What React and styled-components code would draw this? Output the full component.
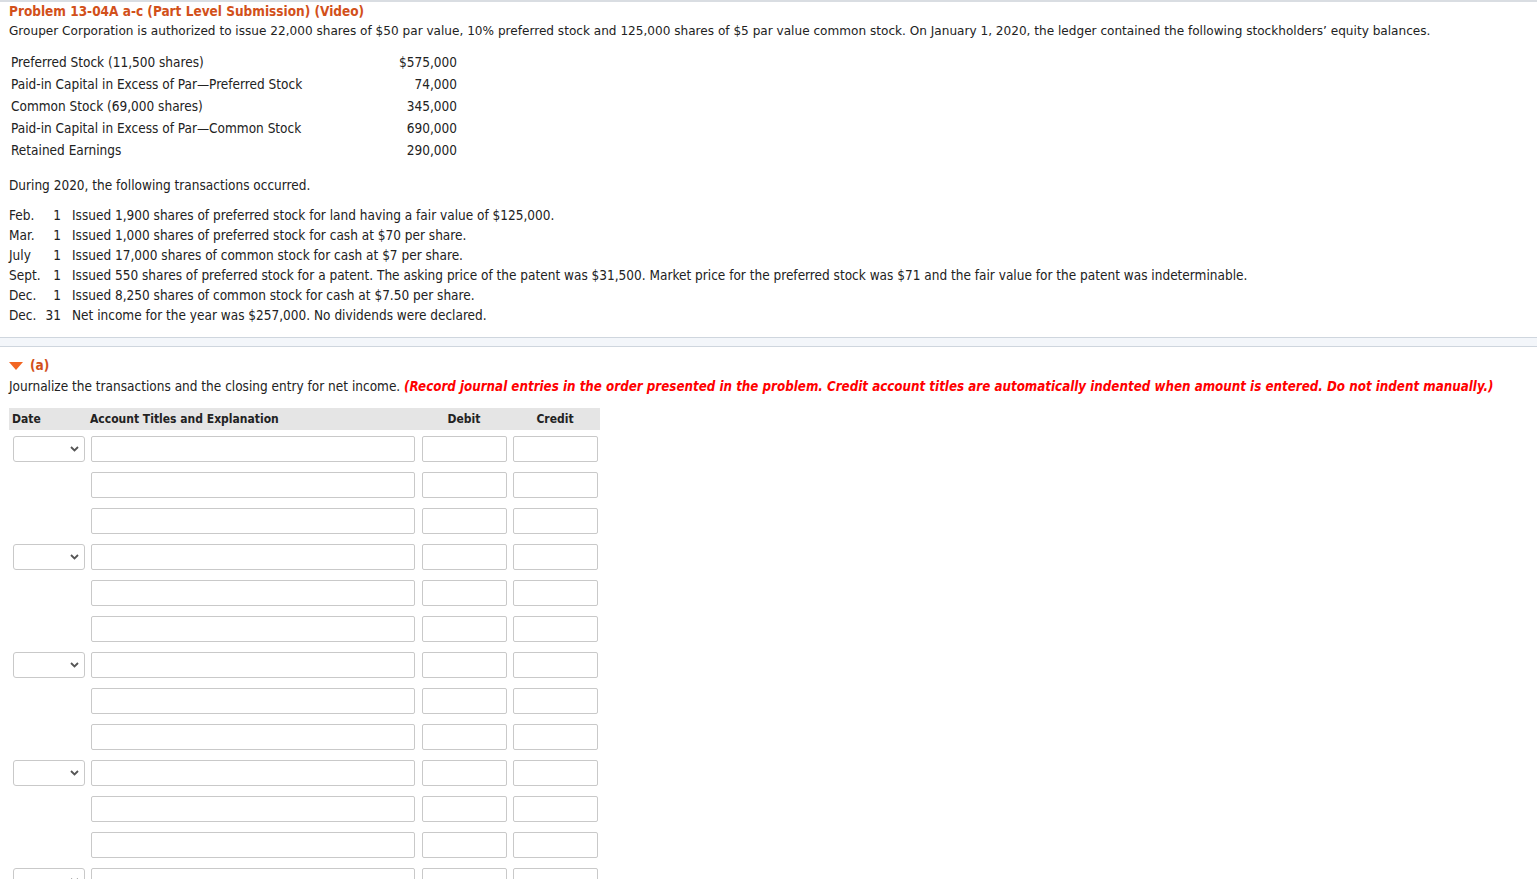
import React from 'react';
import styled, { createGlobalStyle } from 'styled-components';

const GlobalStyle = createGlobalStyle`
  body {
    margin: 0;
    background: #fff;
    color: #222;
    font-family: "DejaVu Sans Condensed", "DejaVu Sans", sans-serif;
    font-size: 13.5px;
  }
`;

const Page = styled.div`
  border-top: 2px solid #d9dde2;
`;

const Problem = styled.div`
  padding: 0 9px;
`;

const Title = styled.div`
  color: #d2501a;
  font-weight: bold;
  line-height: 20px;
  margin-top: -1px;
`;

const Intro = styled.p`
  margin: 0;
  font-family: "DejaVu Sans", sans-serif;
  font-size: 12.1px;
  line-height: 20px;
`;

const Balances = styled.div`
  display: grid;
  grid-template-columns: 330px 116px;
  grid-auto-rows: 22px;
  align-items: center;
  margin: 10px 0 0 2px;
  width: max-content;
`;

const Amount = styled.div`
  text-align: right;
`;

const Lead = styled.p`
  margin: 14px 0 0;
  line-height: 20px;
`;

const Transactions = styled.div`
  display: grid;
  grid-template-columns: 36px 16px 1fr;
  grid-auto-rows: 20px;
  align-items: center;
  margin-top: 10px;
`;

const Month = styled.div``;

const Day = styled.div`
  text-align: right;
`;

const Desc = styled.div`
  padding-left: 11px;
  white-space: nowrap;
`;

const Divider = styled.div`
  margin-top: 12px;
  height: 8px;
  background: #f3f6fa;
  border-top: 1px solid #cfd6de;
  border-bottom: 1px solid #cfd6de;
`;

const Part = styled.div`
  padding: 0 9px;
`;

const PartHead = styled.div`
  display: flex;
  align-items: center;
  gap: 7px;
  margin-top: 8px;
  height: 20px;
  color: #d2501a;
  font-weight: bold;
`;

const Triangle = styled.span`
  width: 0;
  height: 0;
  border-left: 7px solid transparent;
  border-right: 7px solid transparent;
  border-top: 8px solid #f26522;
  margin-top: 2px;
`;

const Instruction = styled.p`
  margin: 1px 0 0;
  line-height: 20px;
  white-space: nowrap;
`;

const Note = styled.em`
  color: #f00;
  font-weight: bold;
  font-size: 13.25px;
`;

const Journal = styled.div`
  margin-top: 11px;
  width: 591px;
`;

const Cols = `
  display: grid;
  grid-template-columns: 79px 330px 92px 90px;
`;

const HeadRow = styled.div`
  ${Cols}
  background: #e5e5e5;
  height: 22px;
  align-items: center;
  font-weight: bold;
  font-size: 12px;
`;

const HeadCell = styled.div`
  padding-left: ${(p) => p.$pad || 0}px;
  text-align: ${(p) => (p.$center ? 'center' : 'left')};
`;

const Row = styled.div`
  ${Cols}
  height: 26px;
  margin-top: ${(p) => (p.$first ? 6 : 10)}px;
`;

const Cell = styled.div`
  padding-left: ${(p) => p.$pad}px;
`;

const Select = styled.div`
  box-sizing: border-box;
  width: 72px;
  height: 26px;
  border: 1px solid #c9c9c9;
  border-radius: 3px;
  background: #fff;
  display: flex;
  align-items: center;
  justify-content: flex-end;
  padding-right: 5px;
`;

const Field = styled.div`
  box-sizing: border-box;
  width: ${(p) => p.$w}px;
  height: 26px;
  border: 1px solid #c9c9c9;
  border-radius: 2px;
  background: #fff;
`;

const Chevron = () => (
  <svg width="9" height="6" viewBox="0 0 9 6">
    <path d="M1 1l3.5 3.5L8 1" fill="none" stroke="#555" strokeWidth="1.8" />
  </svg>
);

const balances = [
  ['Preferred Stock (11,500 shares)', '$575,000'],
  ['Paid-in Capital in Excess of Par\u2014Preferred Stock', '74,000'],
  ['Common Stock (69,000 shares)', '345,000'],
  ['Paid-in Capital in Excess of Par\u2014Common Stock', '690,000'],
  ['Retained Earnings', '290,000'],
];

const transactions = [
  ['Feb.', '1', 'Issued 1,900 shares of preferred stock for land having a fair value of $125,000.'],
  ['Mar.', '1', 'Issued 1,000 shares of preferred stock for cash at $70 per share.'],
  ['July', '1', 'Issued 17,000 shares of common stock for cash at $7 per share.'],
  ['Sept.', '1', 'Issued 550 shares of preferred stock for a patent. The asking price of the patent was $31,500. Market price for the preferred stock was $71 and the fair value for the patent was indeterminable.'],
  ['Dec.', '1', 'Issued 8,250 shares of common stock for cash at $7.50 per share.'],
  ['Dec.', '31', 'Net income for the year was $257,000. No dividends were declared.'],
];

const rows = Array.from({ length: 15 }, (_, i) => i);

const App = () => (
  <Page>
    <GlobalStyle />
    <Problem>
      <Title>Problem 13-04A a-c (Part Level Submission) (Video)</Title>
      <Intro>
        Grouper Corporation is authorized to issue 22,000 shares of $50 par value, 10% preferred stock and
        125,000 shares of $5 par value common stock. On January 1, 2020, the ledger contained the following
        stockholders’ equity balances.
      </Intro>
      <Balances>
        {balances.map(([label, amt]) => (
          <React.Fragment key={label}>
            <div>{label}</div>
            <Amount>{amt}</Amount>
          </React.Fragment>
        ))}
      </Balances>
      <Lead>During 2020, the following transactions occurred.</Lead>
      <Transactions>
        {transactions.map(([m, d, t], i) => (
          <React.Fragment key={i}>
            <Month>{m}</Month>
            <Day>{d}</Day>
            <Desc>{t}</Desc>
          </React.Fragment>
        ))}
      </Transactions>
    </Problem>
    <Divider />
    <Part>
      <PartHead>
        <Triangle />
        <span>(a)</span>
      </PartHead>
      <Instruction>
        Journalize the transactions and the closing entry for net income.{' '}
        <Note>
          (Record journal entries in the order presented in the problem. Credit account titles are
          automatically indented when amount is entered. Do not indent manually.)
        </Note>
      </Instruction>
      <Journal>
        <HeadRow>
          <HeadCell $pad={3}>Date</HeadCell>
          <HeadCell $pad={2}>Account Titles and Explanation</HeadCell>
          <HeadCell $center>Debit</HeadCell>
          <HeadCell $center>Credit</HeadCell>
        </HeadRow>
        {rows.map((i) => (
          <Row key={i} $first={i === 0}>
            <Cell $pad={4}>
              {i % 3 === 0 && (
                <Select>
                  <Chevron />
                </Select>
              )}
            </Cell>
            <Cell $pad={3}>
              <Field $w={324} />
            </Cell>
            <Cell $pad={4}>
              <Field $w={85} />
            </Cell>
            <Cell $pad={3}>
              <Field $w={85} />
            </Cell>
          </Row>
        ))}
      </Journal>
    </Part>
  </Page>
);

export default App;
